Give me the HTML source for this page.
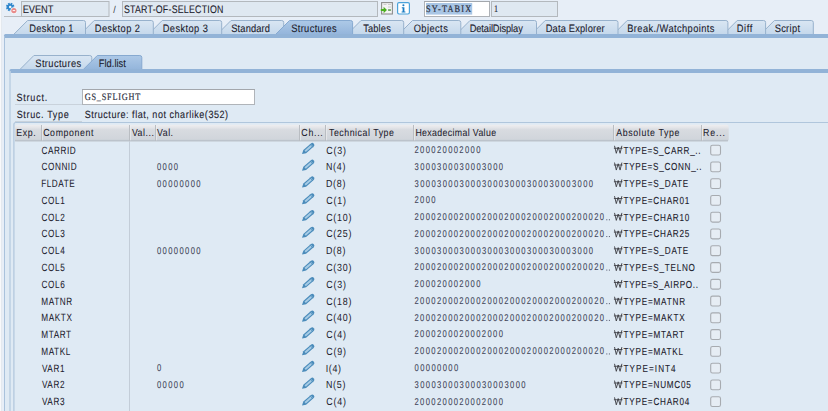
<!DOCTYPE html>
<html><head><meta charset="utf-8"><style>html,body{margin:0;padding:0;width:828px;height:411px;overflow:hidden;background:#e7eef7}svg{display:block}</style></head>
<body><svg width="828" height="411" viewBox="0 0 828 411" text-rendering="geometricPrecision"><defs>
<linearGradient id="gTab" x1="0" y1="0" x2="0" y2="1"><stop offset="0" stop-color="#d9e6f3"/><stop offset="1" stop-color="#c5d8eb"/></linearGradient>
<linearGradient id="gAct" x1="0" y1="0" x2="0" y2="1"><stop offset="0" stop-color="#adc9e7"/><stop offset="1" stop-color="#94b5db"/></linearGradient>
<linearGradient id="gHdr" x1="0" y1="0" x2="0" y2="1"><stop offset="0" stop-color="#eeeef0"/><stop offset="0.14" stop-color="#e6e7ea"/><stop offset="0.3" stop-color="#d8dbe0"/><stop offset="1" stop-color="#cfd4da"/></linearGradient>
</defs>
<rect x="0" y="0" width="828" height="411" fill="#e7eef7"/>
<rect x="0" y="0" width="1" height="411" fill="#f8f9fb"/><rect x="1" y="0" width="1" height="411" fill="#e4e9ef"/>
<rect x="9.25" y="2.80" width="1.9" height="2.3" fill="#2f86cc" transform="rotate(22.5 10.2 7.0)"/>
<rect x="9.25" y="2.80" width="1.9" height="2.3" fill="#2f86cc" transform="rotate(67.5 10.2 7.0)"/>
<rect x="9.25" y="2.80" width="1.9" height="2.3" fill="#2f86cc" transform="rotate(112.5 10.2 7.0)"/>
<rect x="9.25" y="2.80" width="1.9" height="2.3" fill="#2f86cc" transform="rotate(157.5 10.2 7.0)"/>
<rect x="9.25" y="2.80" width="1.9" height="2.3" fill="#2f86cc" transform="rotate(202.5 10.2 7.0)"/>
<rect x="9.25" y="2.80" width="1.9" height="2.3" fill="#2f86cc" transform="rotate(247.5 10.2 7.0)"/>
<rect x="9.25" y="2.80" width="1.9" height="2.3" fill="#2f86cc" transform="rotate(292.5 10.2 7.0)"/>
<rect x="9.25" y="2.80" width="1.9" height="2.3" fill="#2f86cc" transform="rotate(337.5 10.2 7.0)"/>
<circle cx="10.2" cy="7.0" r="2.8" fill="#2f86cc"/><circle cx="10.2" cy="7.0" r="1.25" fill="#f4f7fb"/>
<circle cx="13.9" cy="10.6" r="3.4" fill="#f6f8fb"/><circle cx="13.9" cy="10.6" r="2.65" fill="#e88a8a"/><rect x="12.7" y="10.15" width="2.4" height="0.9" fill="#ffffff"/>
<rect x="4" y="16" width="17.5" height="1" fill="#b9bdc2"/>
<rect x="21.5" y="1.5" width="87.5" height="15" fill="#dfe8f1" stroke="#b3b8bd" stroke-width="1"/>
<rect x="122.5" y="1.5" width="255" height="15" fill="#dfe8f1" stroke="#b3b8bd" stroke-width="1"/>
<rect x="424.5" y="1.5" width="65" height="15" fill="#ffffff" stroke="#aeb2b7" stroke-width="1"/>
<rect x="424" y="1" width="66" height="1" fill="#a3a7ac"/>
<rect x="426" y="3" width="46.2" height="11.6" fill="#a9c6e5"/>
<rect x="491.5" y="1.5" width="66" height="15" fill="#dfe8f1" stroke="#b3b8bd" stroke-width="1"/>
<rect x="381.6" y="2.6" width="10.8" height="11.4" fill="#f4f4f4" stroke="#8d8d8d" stroke-width="1.1"/>
<path d="M383.5,4.5 h3 M388,4.5 h3 M388,7 h3" stroke="#c8c8c8" stroke-width="0.9"/>
<path d="M380.8,8.9 h2.8 v-2.2 l3.4,3.3 l-3.4,3.3 v-2.2 h-2.8 z" fill="#4caf20"/>
<rect x="388.1" y="9.4" width="2.8" height="1.3" fill="#3a8a2a"/>
<rect x="397.6" y="2.6" width="11.8" height="11.4" rx="1.4" fill="#ffffff" stroke="#4aa2da" stroke-width="1.2"/>
<circle cx="403.4" cy="5.2" r="1.05" fill="#1a7cc4"/><path d="M401.8,7.2 h2.6 v4.4 h1 v1 h-3.8 v-1 h1 v-3.4 h-0.8 z" fill="#1a7cc4"/>
<path d="M760.40,34.5 L774.40,20.5 L811.30,20.5 Q813.30,20.5 813.30,22.5 L813.30,34.5 Z" fill="url(#gTab)" stroke="#97b1cc" stroke-width="1"/>
<path d="M723.20,34.5 L737.20,20.5 L763.60,20.5 Q765.60,20.5 765.60,22.5 L765.60,34.5 Z" fill="url(#gTab)" stroke="#97b1cc" stroke-width="1"/>
<path d="M613.20,34.5 L627.20,20.5 L725.90,20.5 Q727.90,20.5 727.90,22.5 L727.90,34.5 Z" fill="url(#gTab)" stroke="#97b1cc" stroke-width="1"/>
<path d="M531.20,34.5 L545.20,20.5 L616.00,20.5 Q618.00,20.5 618.00,22.5 L618.00,34.5 Z" fill="url(#gTab)" stroke="#97b1cc" stroke-width="1"/>
<path d="M456.00,34.5 L470.00,20.5 L534.50,20.5 Q536.50,20.5 536.50,22.5 L536.50,34.5 Z" fill="url(#gTab)" stroke="#97b1cc" stroke-width="1"/>
<path d="M398.50,34.5 L412.50,20.5 L458.80,20.5 Q460.80,20.5 460.80,22.5 L460.80,34.5 Z" fill="url(#gTab)" stroke="#97b1cc" stroke-width="1"/>
<path d="M347.00,34.5 L361.00,20.5 L401.70,20.5 Q403.70,20.5 403.70,22.5 L403.70,34.5 Z" fill="url(#gTab)" stroke="#97b1cc" stroke-width="1"/>
<path d="M217.00,34.5 L231.00,20.5 L281.70,20.5 Q283.70,20.5 283.70,22.5 L283.70,34.5 Z" fill="url(#gTab)" stroke="#97b1cc" stroke-width="1"/>
<path d="M148.20,34.5 L162.20,20.5 L219.70,20.5 Q221.70,20.5 221.70,22.5 L221.70,34.5 Z" fill="url(#gTab)" stroke="#97b1cc" stroke-width="1"/>
<path d="M80.20,34.5 L94.20,20.5 L151.30,20.5 Q153.30,20.5 153.30,22.5 L153.30,34.5 Z" fill="url(#gTab)" stroke="#97b1cc" stroke-width="1"/>
<path d="M13.60,34.5 L27.60,20.5 L83.50,20.5 Q85.50,20.5 85.50,22.5 L85.50,34.5 Z" fill="url(#gTab)" stroke="#97b1cc" stroke-width="1"/>
<path d="M275.50,34.5 L289.50,20.5 L350.60,20.5 Q352.60,20.5 352.60,22.5 L352.60,34.5 Z" fill="url(#gAct)" stroke="#86a9d0" stroke-width="1"/>
<rect x="4" y="34" width="828" height="411" rx="2" fill="#dfeaf4"/>
<rect x="4" y="34" width="828" height="4" rx="1.5" fill="#92b3d7"/>
<rect x="4" y="36" width="1" height="411" fill="#a9c2dc"/>
<path d="M19.90,69.5 L33.90,55.5 L89.80,55.5 Q91.80,55.5 91.80,57.5 L91.80,69.5 Z" fill="url(#gTab)" stroke="#97b1cc" stroke-width="1"/>
<path d="M83.30,69.5 L97.30,55.5 L139.80,55.5 Q141.80,55.5 141.80,57.5 L141.80,69.5 Z" fill="url(#gAct)" stroke="#86a9d0" stroke-width="1"/>
<rect x="9.5" y="69" width="828" height="411" rx="2" fill="#dfeaf4"/>
<rect x="9.5" y="69" width="828" height="3.9" rx="1.5" fill="#92b3d7"/>
<rect x="9.2" y="71" width="1.6" height="411" fill="#bdd1e4"/>
<rect x="15" y="104" width="67" height="1" fill="#c9d2db"/>
<rect x="15" y="121" width="67" height="1" fill="#c9d2db"/>
<rect x="82.5" y="89.5" width="172" height="15" fill="#ffffff" stroke="#b0b4b9" stroke-width="1"/>
<rect x="82" y="89" width="173" height="1" fill="#a3a7ac"/>
<rect x="13.9" y="122.5" width="828" height="411" rx="2" fill="#dfeaf4" stroke="#b0c6dc" stroke-width="1.2"/>
<rect x="15" y="124.8" width="713.7" height="16.4" rx="2" fill="url(#gHdr)"/>
<rect x="15" y="139.9" width="713" height="1.5" fill="#bcc3cb"/>
<rect x="41" y="125" width="1" height="16" fill="#b9bdc2"/><rect x="42" y="125" width="1" height="15.3" fill="#f0f0f2" opacity="0.6"/>
<rect x="129" y="125" width="1" height="16" fill="#b9bdc2"/><rect x="130" y="125" width="1" height="15.3" fill="#f0f0f2" opacity="0.6"/>
<rect x="155" y="125" width="1" height="16" fill="#b9bdc2"/><rect x="156" y="125" width="1" height="15.3" fill="#f0f0f2" opacity="0.6"/>
<rect x="299" y="125" width="1" height="16" fill="#b9bdc2"/><rect x="300" y="125" width="1" height="15.3" fill="#f0f0f2" opacity="0.6"/>
<rect x="325" y="125" width="1" height="16" fill="#b9bdc2"/><rect x="326" y="125" width="1" height="15.3" fill="#f0f0f2" opacity="0.6"/>
<rect x="413" y="125" width="1" height="16" fill="#b9bdc2"/><rect x="414" y="125" width="1" height="15.3" fill="#f0f0f2" opacity="0.6"/>
<rect x="613" y="125" width="1" height="16" fill="#b9bdc2"/><rect x="614" y="125" width="1" height="15.3" fill="#f0f0f2" opacity="0.6"/>
<rect x="701" y="125" width="1" height="16" fill="#b9bdc2"/><rect x="702" y="125" width="1" height="15.3" fill="#f0f0f2" opacity="0.6"/>
<rect x="129" y="141" width="1" height="411" fill="#c3cdd8"/>
<g transform="translate(0 0.00)"><path d="M302.00,154.00 L306.09,153.21 L313.70,146.56 A2.10,2.10 0 0 0 310.94,143.40 L303.33,150.05 Z" fill="#4a8bba"/><path d="M305.82,151.99 L312.68,146.00 L311.36,144.49 L304.50,150.48 Z" fill="#a6cbe5"/><path d="M312.80,147.35 L310.03,144.19" stroke="#4a8bba" stroke-width="0.8"/></g>
<rect x="710.7" y="145.20" width="9.8" height="9.8" rx="1.8" fill="#e6edf4" stroke="#a7abb0" stroke-width="1.1"/>
<path d="M614.5,145.80 L616.3,153.30 L618.2,147.00 L620.1,153.30 L621.9,145.80" fill="none" stroke="#3a3a40" stroke-width="0.9" stroke-linejoin="bevel"/><rect x="613.9" y="147.80" width="8.6" height="0.85" fill="#3a3a40"/>
<g transform="translate(0 16.77)"><path d="M302.00,154.00 L306.09,153.21 L313.70,146.56 A2.10,2.10 0 0 0 310.94,143.40 L303.33,150.05 Z" fill="#4a8bba"/><path d="M305.82,151.99 L312.68,146.00 L311.36,144.49 L304.50,150.48 Z" fill="#a6cbe5"/><path d="M312.80,147.35 L310.03,144.19" stroke="#4a8bba" stroke-width="0.8"/></g>
<rect x="710.7" y="161.97" width="9.8" height="9.8" rx="1.8" fill="#e6edf4" stroke="#a7abb0" stroke-width="1.1"/>
<path d="M614.5,162.57 L616.3,170.07 L618.2,163.77 L620.1,170.07 L621.9,162.57" fill="none" stroke="#3a3a40" stroke-width="0.9" stroke-linejoin="bevel"/><rect x="613.9" y="164.57" width="8.6" height="0.85" fill="#3a3a40"/>
<g transform="translate(0 33.54)"><path d="M302.00,154.00 L306.09,153.21 L313.70,146.56 A2.10,2.10 0 0 0 310.94,143.40 L303.33,150.05 Z" fill="#4a8bba"/><path d="M305.82,151.99 L312.68,146.00 L311.36,144.49 L304.50,150.48 Z" fill="#a6cbe5"/><path d="M312.80,147.35 L310.03,144.19" stroke="#4a8bba" stroke-width="0.8"/></g>
<rect x="710.7" y="178.74" width="9.8" height="9.8" rx="1.8" fill="#e6edf4" stroke="#a7abb0" stroke-width="1.1"/>
<path d="M614.5,179.34 L616.3,186.84 L618.2,180.54 L620.1,186.84 L621.9,179.34" fill="none" stroke="#3a3a40" stroke-width="0.9" stroke-linejoin="bevel"/><rect x="613.9" y="181.34" width="8.6" height="0.85" fill="#3a3a40"/>
<g transform="translate(0 50.31)"><path d="M302.00,154.00 L306.09,153.21 L313.70,146.56 A2.10,2.10 0 0 0 310.94,143.40 L303.33,150.05 Z" fill="#4a8bba"/><path d="M305.82,151.99 L312.68,146.00 L311.36,144.49 L304.50,150.48 Z" fill="#a6cbe5"/><path d="M312.80,147.35 L310.03,144.19" stroke="#4a8bba" stroke-width="0.8"/></g>
<rect x="710.7" y="195.51" width="9.8" height="9.8" rx="1.8" fill="#e6edf4" stroke="#a7abb0" stroke-width="1.1"/>
<path d="M614.5,196.11 L616.3,203.61 L618.2,197.31 L620.1,203.61 L621.9,196.11" fill="none" stroke="#3a3a40" stroke-width="0.9" stroke-linejoin="bevel"/><rect x="613.9" y="198.11" width="8.6" height="0.85" fill="#3a3a40"/>
<g transform="translate(0 67.08)"><path d="M302.00,154.00 L306.09,153.21 L313.70,146.56 A2.10,2.10 0 0 0 310.94,143.40 L303.33,150.05 Z" fill="#4a8bba"/><path d="M305.82,151.99 L312.68,146.00 L311.36,144.49 L304.50,150.48 Z" fill="#a6cbe5"/><path d="M312.80,147.35 L310.03,144.19" stroke="#4a8bba" stroke-width="0.8"/></g>
<rect x="710.7" y="212.28" width="9.8" height="9.8" rx="1.8" fill="#e6edf4" stroke="#a7abb0" stroke-width="1.1"/>
<path d="M614.5,212.88 L616.3,220.38 L618.2,214.08 L620.1,220.38 L621.9,212.88" fill="none" stroke="#3a3a40" stroke-width="0.9" stroke-linejoin="bevel"/><rect x="613.9" y="214.88" width="8.6" height="0.85" fill="#3a3a40"/>
<g transform="translate(0 83.85)"><path d="M302.00,154.00 L306.09,153.21 L313.70,146.56 A2.10,2.10 0 0 0 310.94,143.40 L303.33,150.05 Z" fill="#4a8bba"/><path d="M305.82,151.99 L312.68,146.00 L311.36,144.49 L304.50,150.48 Z" fill="#a6cbe5"/><path d="M312.80,147.35 L310.03,144.19" stroke="#4a8bba" stroke-width="0.8"/></g>
<rect x="710.7" y="229.05" width="9.8" height="9.8" rx="1.8" fill="#e6edf4" stroke="#a7abb0" stroke-width="1.1"/>
<path d="M614.5,229.65 L616.3,237.15 L618.2,230.85 L620.1,237.15 L621.9,229.65" fill="none" stroke="#3a3a40" stroke-width="0.9" stroke-linejoin="bevel"/><rect x="613.9" y="231.65" width="8.6" height="0.85" fill="#3a3a40"/>
<g transform="translate(0 100.62)"><path d="M302.00,154.00 L306.09,153.21 L313.70,146.56 A2.10,2.10 0 0 0 310.94,143.40 L303.33,150.05 Z" fill="#4a8bba"/><path d="M305.82,151.99 L312.68,146.00 L311.36,144.49 L304.50,150.48 Z" fill="#a6cbe5"/><path d="M312.80,147.35 L310.03,144.19" stroke="#4a8bba" stroke-width="0.8"/></g>
<rect x="710.7" y="245.82" width="9.8" height="9.8" rx="1.8" fill="#e6edf4" stroke="#a7abb0" stroke-width="1.1"/>
<path d="M614.5,246.42 L616.3,253.92 L618.2,247.62 L620.1,253.92 L621.9,246.42" fill="none" stroke="#3a3a40" stroke-width="0.9" stroke-linejoin="bevel"/><rect x="613.9" y="248.42" width="8.6" height="0.85" fill="#3a3a40"/>
<g transform="translate(0 117.39)"><path d="M302.00,154.00 L306.09,153.21 L313.70,146.56 A2.10,2.10 0 0 0 310.94,143.40 L303.33,150.05 Z" fill="#4a8bba"/><path d="M305.82,151.99 L312.68,146.00 L311.36,144.49 L304.50,150.48 Z" fill="#a6cbe5"/><path d="M312.80,147.35 L310.03,144.19" stroke="#4a8bba" stroke-width="0.8"/></g>
<rect x="710.7" y="262.59" width="9.8" height="9.8" rx="1.8" fill="#e6edf4" stroke="#a7abb0" stroke-width="1.1"/>
<path d="M614.5,263.19 L616.3,270.69 L618.2,264.39 L620.1,270.69 L621.9,263.19" fill="none" stroke="#3a3a40" stroke-width="0.9" stroke-linejoin="bevel"/><rect x="613.9" y="265.19" width="8.6" height="0.85" fill="#3a3a40"/>
<g transform="translate(0 134.16)"><path d="M302.00,154.00 L306.09,153.21 L313.70,146.56 A2.10,2.10 0 0 0 310.94,143.40 L303.33,150.05 Z" fill="#4a8bba"/><path d="M305.82,151.99 L312.68,146.00 L311.36,144.49 L304.50,150.48 Z" fill="#a6cbe5"/><path d="M312.80,147.35 L310.03,144.19" stroke="#4a8bba" stroke-width="0.8"/></g>
<rect x="710.7" y="279.36" width="9.8" height="9.8" rx="1.8" fill="#e6edf4" stroke="#a7abb0" stroke-width="1.1"/>
<path d="M614.5,279.96 L616.3,287.46 L618.2,281.16 L620.1,287.46 L621.9,279.96" fill="none" stroke="#3a3a40" stroke-width="0.9" stroke-linejoin="bevel"/><rect x="613.9" y="281.96" width="8.6" height="0.85" fill="#3a3a40"/>
<g transform="translate(0 150.93)"><path d="M302.00,154.00 L306.09,153.21 L313.70,146.56 A2.10,2.10 0 0 0 310.94,143.40 L303.33,150.05 Z" fill="#4a8bba"/><path d="M305.82,151.99 L312.68,146.00 L311.36,144.49 L304.50,150.48 Z" fill="#a6cbe5"/><path d="M312.80,147.35 L310.03,144.19" stroke="#4a8bba" stroke-width="0.8"/></g>
<rect x="710.7" y="296.13" width="9.8" height="9.8" rx="1.8" fill="#e6edf4" stroke="#a7abb0" stroke-width="1.1"/>
<path d="M614.5,296.73 L616.3,304.23 L618.2,297.93 L620.1,304.23 L621.9,296.73" fill="none" stroke="#3a3a40" stroke-width="0.9" stroke-linejoin="bevel"/><rect x="613.9" y="298.73" width="8.6" height="0.85" fill="#3a3a40"/>
<g transform="translate(0 167.70)"><path d="M302.00,154.00 L306.09,153.21 L313.70,146.56 A2.10,2.10 0 0 0 310.94,143.40 L303.33,150.05 Z" fill="#4a8bba"/><path d="M305.82,151.99 L312.68,146.00 L311.36,144.49 L304.50,150.48 Z" fill="#a6cbe5"/><path d="M312.80,147.35 L310.03,144.19" stroke="#4a8bba" stroke-width="0.8"/></g>
<rect x="710.7" y="312.90" width="9.8" height="9.8" rx="1.8" fill="#e6edf4" stroke="#a7abb0" stroke-width="1.1"/>
<path d="M614.5,313.50 L616.3,321.00 L618.2,314.70 L620.1,321.00 L621.9,313.50" fill="none" stroke="#3a3a40" stroke-width="0.9" stroke-linejoin="bevel"/><rect x="613.9" y="315.50" width="8.6" height="0.85" fill="#3a3a40"/>
<g transform="translate(0 184.47)"><path d="M302.00,154.00 L306.09,153.21 L313.70,146.56 A2.10,2.10 0 0 0 310.94,143.40 L303.33,150.05 Z" fill="#4a8bba"/><path d="M305.82,151.99 L312.68,146.00 L311.36,144.49 L304.50,150.48 Z" fill="#a6cbe5"/><path d="M312.80,147.35 L310.03,144.19" stroke="#4a8bba" stroke-width="0.8"/></g>
<rect x="710.7" y="329.67" width="9.8" height="9.8" rx="1.8" fill="#e6edf4" stroke="#a7abb0" stroke-width="1.1"/>
<path d="M614.5,330.27 L616.3,337.77 L618.2,331.47 L620.1,337.77 L621.9,330.27" fill="none" stroke="#3a3a40" stroke-width="0.9" stroke-linejoin="bevel"/><rect x="613.9" y="332.27" width="8.6" height="0.85" fill="#3a3a40"/>
<g transform="translate(0 201.24)"><path d="M302.00,154.00 L306.09,153.21 L313.70,146.56 A2.10,2.10 0 0 0 310.94,143.40 L303.33,150.05 Z" fill="#4a8bba"/><path d="M305.82,151.99 L312.68,146.00 L311.36,144.49 L304.50,150.48 Z" fill="#a6cbe5"/><path d="M312.80,147.35 L310.03,144.19" stroke="#4a8bba" stroke-width="0.8"/></g>
<rect x="710.7" y="346.44" width="9.8" height="9.8" rx="1.8" fill="#e6edf4" stroke="#a7abb0" stroke-width="1.1"/>
<path d="M614.5,347.04 L616.3,354.54 L618.2,348.24 L620.1,354.54 L621.9,347.04" fill="none" stroke="#3a3a40" stroke-width="0.9" stroke-linejoin="bevel"/><rect x="613.9" y="349.04" width="8.6" height="0.85" fill="#3a3a40"/>
<g transform="translate(0 218.01)"><path d="M302.00,154.00 L306.09,153.21 L313.70,146.56 A2.10,2.10 0 0 0 310.94,143.40 L303.33,150.05 Z" fill="#4a8bba"/><path d="M305.82,151.99 L312.68,146.00 L311.36,144.49 L304.50,150.48 Z" fill="#a6cbe5"/><path d="M312.80,147.35 L310.03,144.19" stroke="#4a8bba" stroke-width="0.8"/></g>
<rect x="710.7" y="363.21" width="9.8" height="9.8" rx="1.8" fill="#e6edf4" stroke="#a7abb0" stroke-width="1.1"/>
<path d="M614.5,363.81 L616.3,371.31 L618.2,365.01 L620.1,371.31 L621.9,363.81" fill="none" stroke="#3a3a40" stroke-width="0.9" stroke-linejoin="bevel"/><rect x="613.9" y="365.81" width="8.6" height="0.85" fill="#3a3a40"/>
<g transform="translate(0 234.78)"><path d="M302.00,154.00 L306.09,153.21 L313.70,146.56 A2.10,2.10 0 0 0 310.94,143.40 L303.33,150.05 Z" fill="#4a8bba"/><path d="M305.82,151.99 L312.68,146.00 L311.36,144.49 L304.50,150.48 Z" fill="#a6cbe5"/><path d="M312.80,147.35 L310.03,144.19" stroke="#4a8bba" stroke-width="0.8"/></g>
<rect x="710.7" y="379.98" width="9.8" height="9.8" rx="1.8" fill="#e6edf4" stroke="#a7abb0" stroke-width="1.1"/>
<path d="M614.5,380.58 L616.3,388.08 L618.2,381.78 L620.1,388.08 L621.9,380.58" fill="none" stroke="#3a3a40" stroke-width="0.9" stroke-linejoin="bevel"/><rect x="613.9" y="382.58" width="8.6" height="0.85" fill="#3a3a40"/>
<g transform="translate(0 251.55)"><path d="M302.00,154.00 L306.09,153.21 L313.70,146.56 A2.10,2.10 0 0 0 310.94,143.40 L303.33,150.05 Z" fill="#4a8bba"/><path d="M305.82,151.99 L312.68,146.00 L311.36,144.49 L304.50,150.48 Z" fill="#a6cbe5"/><path d="M312.80,147.35 L310.03,144.19" stroke="#4a8bba" stroke-width="0.8"/></g>
<rect x="710.7" y="396.75" width="9.8" height="9.8" rx="1.8" fill="#e6edf4" stroke="#a7abb0" stroke-width="1.1"/>
<path d="M614.5,397.35 L616.3,404.85 L618.2,398.55 L620.1,404.85 L621.9,397.35" fill="none" stroke="#3a3a40" stroke-width="0.9" stroke-linejoin="bevel"/><rect x="613.9" y="399.35" width="8.6" height="0.85" fill="#3a3a40"/>
<rect x="606.3" y="219.28" width="1" height="1" fill="#50546a"/><rect x="608.9" y="219.28" width="1" height="1" fill="#50546a"/>
<rect x="606.3" y="236.05" width="1" height="1" fill="#50546a"/><rect x="608.9" y="236.05" width="1" height="1" fill="#50546a"/>
<rect x="606.3" y="269.59" width="1" height="1" fill="#50546a"/><rect x="608.9" y="269.59" width="1" height="1" fill="#50546a"/>
<rect x="606.3" y="303.13" width="1" height="1" fill="#50546a"/><rect x="608.9" y="303.13" width="1" height="1" fill="#50546a"/>
<rect x="606.3" y="319.90" width="1" height="1" fill="#50546a"/><rect x="608.9" y="319.90" width="1" height="1" fill="#50546a"/>
<rect x="606.3" y="353.44" width="1" height="1" fill="#50546a"/><rect x="608.9" y="353.44" width="1" height="1" fill="#50546a"/>
<text transform="translate(22.65 13.10) scale(0.8500 1)" font-family="Liberation Sans" font-size="11" fill="#1c202c" letter-spacing="-0.097" stroke="#1c202c" stroke-width="0.1">EVENT</text>
<text transform="translate(113.20 12.90) scale(0.9000 1)" font-family="Liberation Sans" font-size="10" fill="#3a3d4a">/</text>
<text transform="translate(123.95 13.10) scale(0.8000 1)" font-family="Liberation Sans" font-size="11" fill="#1c202c" letter-spacing="0.285" stroke="#1c202c" stroke-width="0.1">START-OF-SELECTION</text>
<text transform="translate(493.78 12.30) scale(0.9000 1)" font-family="Liberation Serif" font-size="10" fill="#2c3040" stroke="#2c3040" stroke-width="0.05">1</text>
<text transform="translate(426.01 12.20) scale(0.8400 1)" font-family="Liberation Serif" font-size="9.8" fill="#2c3040" letter-spacing="1.403" stroke="#2c3040" stroke-width="0.22">SY-TABIX</text>
<text transform="translate(29.26 31.90) scale(0.8600 1)" font-family="Liberation Sans" font-size="10.8" fill="#1c202c" letter-spacing="0.342" stroke="#1c202c" stroke-width="0.1">Desktop 1</text>
<text transform="translate(94.76 31.90) scale(0.8600 1)" font-family="Liberation Sans" font-size="10.8" fill="#1c202c" letter-spacing="0.487" stroke="#1c202c" stroke-width="0.1">Desktop 2</text>
<text transform="translate(162.76 31.90) scale(0.8600 1)" font-family="Liberation Sans" font-size="10.8" fill="#1c202c" letter-spacing="0.474" stroke="#1c202c" stroke-width="0.1">Desktop 3</text>
<text transform="translate(231.23 31.90) scale(0.8600 1)" font-family="Liberation Sans" font-size="10.8" fill="#1c202c" letter-spacing="0.182" stroke="#1c202c" stroke-width="0.1">Standard</text>
<text transform="translate(291.13 31.90) scale(0.8600 1)" font-family="Liberation Sans" font-size="10.8" fill="#1c202c" letter-spacing="0.429" stroke="#1c202c" stroke-width="0.1">Structures</text>
<text transform="translate(363.21 31.90) scale(0.8600 1)" font-family="Liberation Sans" font-size="10.8" fill="#1c202c" letter-spacing="0.167" stroke="#1c202c" stroke-width="0.1">Tables</text>
<text transform="translate(413.63 31.90) scale(0.8600 1)" font-family="Liberation Sans" font-size="10.8" fill="#1c202c" letter-spacing="0.516" stroke="#1c202c" stroke-width="0.1">Objects</text>
<text transform="translate(469.66 31.90) scale(0.8600 1)" font-family="Liberation Sans" font-size="10.8" fill="#1c202c" letter-spacing="-0.102" stroke="#1c202c" stroke-width="0.1">DetailDisplay</text>
<text transform="translate(545.66 31.90) scale(0.8600 1)" font-family="Liberation Sans" font-size="10.8" fill="#1c202c" letter-spacing="0.221" stroke="#1c202c" stroke-width="0.1">Data Explorer</text>
<text transform="translate(627.26 31.90) scale(0.8600 1)" font-family="Liberation Sans" font-size="10.8" fill="#1c202c" letter-spacing="0.481" stroke="#1c202c" stroke-width="0.1">Break./Watchpoints</text>
<text transform="translate(736.66 31.90) scale(0.8600 1)" font-family="Liberation Sans" font-size="10.8" fill="#1c202c" letter-spacing="0.720" stroke="#1c202c" stroke-width="0.1">Diff</text>
<text transform="translate(774.63 31.90) scale(0.8600 1)" font-family="Liberation Sans" font-size="10.8" fill="#1c202c" letter-spacing="0.374" stroke="#1c202c" stroke-width="0.1">Script</text>
<text transform="translate(35.33 66.60) scale(0.8600 1)" font-family="Liberation Sans" font-size="10.8" fill="#1c202c" letter-spacing="0.442" stroke="#1c202c" stroke-width="0.1">Structures</text>
<text transform="translate(98.86 66.60) scale(0.8600 1)" font-family="Liberation Sans" font-size="10.8" fill="#1c202c" letter-spacing="0.015" stroke="#1c202c" stroke-width="0.1">Fld.list</text>
<text transform="translate(16.44 100.60) scale(0.8600 1)" font-family="Liberation Sans" font-size="10.5" fill="#1c202c" letter-spacing="0.923" stroke="#1c202c" stroke-width="0.1">Struct.</text>
<text transform="translate(16.64 118.10) scale(0.8600 1)" font-family="Liberation Sans" font-size="10.5" fill="#1c202c" letter-spacing="0.758" stroke="#1c202c" stroke-width="0.1">Struc. Type</text>
<text transform="translate(84.67 99.70) scale(0.8400 1)" font-family="Liberation Serif" font-size="9.8" fill="#2c3040" letter-spacing="0.944" stroke="#2c3040" stroke-width="0.2">GS_SFLIGHT</text>
<text transform="translate(84.64 117.90) scale(0.8600 1)" font-family="Liberation Sans" font-size="10.5" fill="#1c202c" letter-spacing="0.615" stroke="#1c202c" stroke-width="0.1">Structure: flat, not charlike(352)</text>
<text transform="translate(16.20 136.30) scale(0.8600 1)" font-family="Liberation Sans" font-size="10.2" fill="#1c202c" letter-spacing="0.744" stroke="#1c202c" stroke-width="0.06">Exp.</text>
<text transform="translate(43.16 136.30) scale(0.8600 1)" font-family="Liberation Sans" font-size="10.2" fill="#1c202c" letter-spacing="0.737" stroke="#1c202c" stroke-width="0.06">Component</text>
<text transform="translate(131.90 136.30) scale(0.8600 1)" font-family="Liberation Sans" font-size="10.2" fill="#1c202c" letter-spacing="0.612" stroke="#1c202c" stroke-width="0.06">Val...</text>
<text transform="translate(157.00 136.30) scale(0.8600 1)" font-family="Liberation Sans" font-size="10.2" fill="#1c202c" letter-spacing="0.623" stroke="#1c202c" stroke-width="0.06">Val.</text>
<text transform="translate(301.36 136.30) scale(0.8600 1)" font-family="Liberation Sans" font-size="10.2" fill="#1c202c" letter-spacing="0.838" stroke="#1c202c" stroke-width="0.06">Ch...</text>
<text transform="translate(329.02 136.30) scale(0.8600 1)" font-family="Liberation Sans" font-size="10.2" fill="#1c202c" letter-spacing="0.632" stroke="#1c202c" stroke-width="0.06">Technical Type</text>
<text transform="translate(415.40 136.30) scale(0.8600 1)" font-family="Liberation Sans" font-size="10.2" fill="#1c202c" letter-spacing="0.421" stroke="#1c202c" stroke-width="0.06">Hexadecimal Value</text>
<text transform="translate(616.20 136.30) scale(0.8600 1)" font-family="Liberation Sans" font-size="10.2" fill="#1c202c" letter-spacing="0.768" stroke="#1c202c" stroke-width="0.06">Absolute Type</text>
<text transform="translate(703.10 136.30) scale(0.8600 1)" font-family="Liberation Sans" font-size="10.2" fill="#1c202c" letter-spacing="0.973" stroke="#1c202c" stroke-width="0.06">Re...</text>
<text transform="translate(41.49 153.60) scale(0.7800 1)" font-family="Liberation Sans" font-size="10.5" fill="#1c202c" letter-spacing="0.705" stroke="#1c202c" stroke-width="0.05">CARRID</text>
<text transform="translate(326.16 153.60) scale(0.8600 1)" font-family="Liberation Sans" font-size="10.3" fill="#1c202c" letter-spacing="0.956" stroke="#1c202c" stroke-width="0.03">C(3)</text>
<text transform="translate(414.42 153.00) scale(0.7800 1)" font-family="Liberation Sans" font-size="9.8" fill="#3e4256" letter-spacing="1.755" stroke="#3e4256" stroke-width="0.08">200020002000</text>
<text transform="translate(623.54 153.60) scale(0.8000 1)" font-family="Liberation Sans" font-size="10.2" fill="#1c202c" letter-spacing="0.850" stroke="#1c202c" stroke-width="0.1">TYPE=S_CARR_..</text>
<text transform="translate(41.49 170.37) scale(0.7800 1)" font-family="Liberation Sans" font-size="10.5" fill="#1c202c" letter-spacing="0.726" stroke="#1c202c" stroke-width="0.05">CONNID</text>
<text transform="translate(156.97 169.77) scale(0.7800 1)" font-family="Liberation Sans" font-size="9.8" fill="#3e4256" letter-spacing="1.755" stroke="#3e4256" stroke-width="0.08">0000</text>
<text transform="translate(325.89 170.37) scale(0.8600 1)" font-family="Liberation Sans" font-size="10.3" fill="#1c202c" letter-spacing="0.940" stroke="#1c202c" stroke-width="0.03">N(4)</text>
<text transform="translate(414.57 169.77) scale(0.7800 1)" font-family="Liberation Sans" font-size="9.8" fill="#3e4256" letter-spacing="1.755" stroke="#3e4256" stroke-width="0.08">3000300030003000</text>
<text transform="translate(623.54 170.37) scale(0.8000 1)" font-family="Liberation Sans" font-size="10.2" fill="#1c202c" letter-spacing="0.862" stroke="#1c202c" stroke-width="0.1">TYPE=S_CONN_..</text>
<text transform="translate(41.24 187.14) scale(0.7800 1)" font-family="Liberation Sans" font-size="10.5" fill="#1c202c" letter-spacing="0.687" stroke="#1c202c" stroke-width="0.05">FLDATE</text>
<text transform="translate(156.97 186.54) scale(0.7800 1)" font-family="Liberation Sans" font-size="9.8" fill="#3e4256" letter-spacing="1.755" stroke="#3e4256" stroke-width="0.08">00000000</text>
<text transform="translate(325.89 187.14) scale(0.8600 1)" font-family="Liberation Sans" font-size="10.3" fill="#1c202c" letter-spacing="0.940" stroke="#1c202c" stroke-width="0.03">D(8)</text>
<text transform="translate(414.57 186.54) scale(0.7800 1)" font-family="Liberation Sans" font-size="9.8" fill="#3e4256" letter-spacing="1.755" stroke="#3e4256" stroke-width="0.08">30003000300030003000300030003000</text>
<text transform="translate(623.54 187.14) scale(0.8000 1)" font-family="Liberation Sans" font-size="10.2" fill="#1c202c" letter-spacing="0.931" stroke="#1c202c" stroke-width="0.1">TYPE=S_DATE</text>
<text transform="translate(41.49 203.91) scale(0.7800 1)" font-family="Liberation Sans" font-size="10.5" fill="#1c202c" letter-spacing="0.790" stroke="#1c202c" stroke-width="0.05">COL1</text>
<text transform="translate(326.16 203.91) scale(0.8600 1)" font-family="Liberation Sans" font-size="10.3" fill="#1c202c" letter-spacing="0.956" stroke="#1c202c" stroke-width="0.03">C(1)</text>
<text transform="translate(414.42 203.31) scale(0.7800 1)" font-family="Liberation Sans" font-size="9.8" fill="#3e4256" letter-spacing="1.755" stroke="#3e4256" stroke-width="0.08">2000</text>
<text transform="translate(623.54 203.91) scale(0.8000 1)" font-family="Liberation Sans" font-size="10.2" fill="#1c202c" letter-spacing="0.947" stroke="#1c202c" stroke-width="0.1">TYPE=CHAR01</text>
<text transform="translate(41.49 220.68) scale(0.7800 1)" font-family="Liberation Sans" font-size="10.5" fill="#1c202c" letter-spacing="0.790" stroke="#1c202c" stroke-width="0.05">COL2</text>
<text transform="translate(326.16 220.68) scale(0.8600 1)" font-family="Liberation Sans" font-size="10.3" fill="#1c202c" letter-spacing="0.933" stroke="#1c202c" stroke-width="0.03">C(10)</text>
<text transform="translate(414.42 220.08) scale(0.7800 1)" font-family="Liberation Sans" font-size="9.8" fill="#3e4256" letter-spacing="1.755" stroke="#3e4256" stroke-width="0.08">2000200020002000200020002000200020</text>
<text transform="translate(623.54 220.68) scale(0.8000 1)" font-family="Liberation Sans" font-size="10.2" fill="#1c202c" letter-spacing="0.949" stroke="#1c202c" stroke-width="0.1">TYPE=CHAR10</text>
<text transform="translate(41.49 237.45) scale(0.7800 1)" font-family="Liberation Sans" font-size="10.5" fill="#1c202c" letter-spacing="0.793" stroke="#1c202c" stroke-width="0.05">COL3</text>
<text transform="translate(326.16 237.45) scale(0.8600 1)" font-family="Liberation Sans" font-size="10.3" fill="#1c202c" letter-spacing="0.933" stroke="#1c202c" stroke-width="0.03">C(25)</text>
<text transform="translate(414.42 236.85) scale(0.7800 1)" font-family="Liberation Sans" font-size="9.8" fill="#3e4256" letter-spacing="1.755" stroke="#3e4256" stroke-width="0.08">2000200020002000200020002000200020</text>
<text transform="translate(623.54 237.45) scale(0.8000 1)" font-family="Liberation Sans" font-size="10.2" fill="#1c202c" letter-spacing="0.949" stroke="#1c202c" stroke-width="0.1">TYPE=CHAR25</text>
<text transform="translate(41.49 254.22) scale(0.7800 1)" font-family="Liberation Sans" font-size="10.5" fill="#1c202c" letter-spacing="0.797" stroke="#1c202c" stroke-width="0.05">COL4</text>
<text transform="translate(156.97 253.62) scale(0.7800 1)" font-family="Liberation Sans" font-size="9.8" fill="#3e4256" letter-spacing="1.755" stroke="#3e4256" stroke-width="0.08">00000000</text>
<text transform="translate(325.89 254.22) scale(0.8600 1)" font-family="Liberation Sans" font-size="10.3" fill="#1c202c" letter-spacing="0.940" stroke="#1c202c" stroke-width="0.03">D(8)</text>
<text transform="translate(414.57 253.62) scale(0.7800 1)" font-family="Liberation Sans" font-size="9.8" fill="#3e4256" letter-spacing="1.755" stroke="#3e4256" stroke-width="0.08">30003000300030003000300030003000</text>
<text transform="translate(623.54 254.22) scale(0.8000 1)" font-family="Liberation Sans" font-size="10.2" fill="#1c202c" letter-spacing="0.931" stroke="#1c202c" stroke-width="0.1">TYPE=S_DATE</text>
<text transform="translate(41.49 270.99) scale(0.7800 1)" font-family="Liberation Sans" font-size="10.5" fill="#1c202c" letter-spacing="0.793" stroke="#1c202c" stroke-width="0.05">COL5</text>
<text transform="translate(326.16 270.99) scale(0.8600 1)" font-family="Liberation Sans" font-size="10.3" fill="#1c202c" letter-spacing="0.933" stroke="#1c202c" stroke-width="0.03">C(30)</text>
<text transform="translate(414.42 270.39) scale(0.7800 1)" font-family="Liberation Sans" font-size="9.8" fill="#3e4256" letter-spacing="1.755" stroke="#3e4256" stroke-width="0.08">2000200020002000200020002000200020</text>
<text transform="translate(623.54 270.99) scale(0.8000 1)" font-family="Liberation Sans" font-size="10.2" fill="#1c202c" letter-spacing="0.935" stroke="#1c202c" stroke-width="0.1">TYPE=S_TELNO</text>
<text transform="translate(41.49 287.76) scale(0.7800 1)" font-family="Liberation Sans" font-size="10.5" fill="#1c202c" letter-spacing="0.793" stroke="#1c202c" stroke-width="0.05">COL6</text>
<text transform="translate(326.16 287.76) scale(0.8600 1)" font-family="Liberation Sans" font-size="10.3" fill="#1c202c" letter-spacing="0.956" stroke="#1c202c" stroke-width="0.03">C(3)</text>
<text transform="translate(414.42 287.16) scale(0.7800 1)" font-family="Liberation Sans" font-size="9.8" fill="#3e4256" letter-spacing="1.755" stroke="#3e4256" stroke-width="0.08">200020002000</text>
<text transform="translate(623.54 287.76) scale(0.8000 1)" font-family="Liberation Sans" font-size="10.2" fill="#1c202c" letter-spacing="0.822" stroke="#1c202c" stroke-width="0.1">TYPE=S_AIRPO..</text>
<text transform="translate(41.24 304.53) scale(0.7800 1)" font-family="Liberation Sans" font-size="10.5" fill="#1c202c" letter-spacing="0.791" stroke="#1c202c" stroke-width="0.05">MATNR</text>
<text transform="translate(326.16 304.53) scale(0.8600 1)" font-family="Liberation Sans" font-size="10.3" fill="#1c202c" letter-spacing="0.933" stroke="#1c202c" stroke-width="0.03">C(18)</text>
<text transform="translate(414.42 303.93) scale(0.7800 1)" font-family="Liberation Sans" font-size="9.8" fill="#3e4256" letter-spacing="1.755" stroke="#3e4256" stroke-width="0.08">2000200020002000200020002000200020</text>
<text transform="translate(623.54 304.53) scale(0.8000 1)" font-family="Liberation Sans" font-size="10.2" fill="#1c202c" letter-spacing="0.984" stroke="#1c202c" stroke-width="0.1">TYPE=MATNR</text>
<text transform="translate(41.24 321.30) scale(0.7800 1)" font-family="Liberation Sans" font-size="10.5" fill="#1c202c" letter-spacing="0.789" stroke="#1c202c" stroke-width="0.05">MAKTX</text>
<text transform="translate(326.16 321.30) scale(0.8600 1)" font-family="Liberation Sans" font-size="10.3" fill="#1c202c" letter-spacing="0.933" stroke="#1c202c" stroke-width="0.03">C(40)</text>
<text transform="translate(414.42 320.70) scale(0.7800 1)" font-family="Liberation Sans" font-size="9.8" fill="#3e4256" letter-spacing="1.755" stroke="#3e4256" stroke-width="0.08">2000200020002000200020002000200020</text>
<text transform="translate(623.54 321.30) scale(0.8000 1)" font-family="Liberation Sans" font-size="10.2" fill="#1c202c" letter-spacing="0.982" stroke="#1c202c" stroke-width="0.1">TYPE=MAKTX</text>
<text transform="translate(41.24 338.07) scale(0.7800 1)" font-family="Liberation Sans" font-size="10.5" fill="#1c202c" letter-spacing="0.766" stroke="#1c202c" stroke-width="0.05">MTART</text>
<text transform="translate(326.16 338.07) scale(0.8600 1)" font-family="Liberation Sans" font-size="10.3" fill="#1c202c" letter-spacing="0.956" stroke="#1c202c" stroke-width="0.03">C(4)</text>
<text transform="translate(414.42 337.47) scale(0.7800 1)" font-family="Liberation Sans" font-size="9.8" fill="#3e4256" letter-spacing="1.755" stroke="#3e4256" stroke-width="0.08">2000200020002000</text>
<text transform="translate(623.54 338.07) scale(0.8000 1)" font-family="Liberation Sans" font-size="10.2" fill="#1c202c" letter-spacing="0.968" stroke="#1c202c" stroke-width="0.1">TYPE=MTART</text>
<text transform="translate(41.24 354.84) scale(0.7800 1)" font-family="Liberation Sans" font-size="10.5" fill="#1c202c" letter-spacing="0.743" stroke="#1c202c" stroke-width="0.05">MATKL</text>
<text transform="translate(326.16 354.84) scale(0.8600 1)" font-family="Liberation Sans" font-size="10.3" fill="#1c202c" letter-spacing="0.956" stroke="#1c202c" stroke-width="0.03">C(9)</text>
<text transform="translate(414.42 354.24) scale(0.7800 1)" font-family="Liberation Sans" font-size="9.8" fill="#3e4256" letter-spacing="1.755" stroke="#3e4256" stroke-width="0.08">2000200020002000200020002000200020</text>
<text transform="translate(623.54 354.84) scale(0.8000 1)" font-family="Liberation Sans" font-size="10.2" fill="#1c202c" letter-spacing="0.953" stroke="#1c202c" stroke-width="0.1">TYPE=MATKL</text>
<text transform="translate(41.90 371.61) scale(0.7800 1)" font-family="Liberation Sans" font-size="10.5" fill="#1c202c" letter-spacing="0.783" stroke="#1c202c" stroke-width="0.05">VAR1</text>
<text transform="translate(156.97 371.01) scale(0.7800 1)" font-family="Liberation Sans" font-size="9.8" fill="#3e4256" letter-spacing="1.755" stroke="#3e4256" stroke-width="0.08">0</text>
<text transform="translate(325.80 371.61) scale(0.8600 1)" font-family="Liberation Sans" font-size="10.3" fill="#1c202c" letter-spacing="0.704" stroke="#1c202c" stroke-width="0.03">I(4)</text>
<text transform="translate(414.57 371.01) scale(0.7800 1)" font-family="Liberation Sans" font-size="9.8" fill="#3e4256" letter-spacing="1.755" stroke="#3e4256" stroke-width="0.08">00000000</text>
<text transform="translate(623.54 371.61) scale(0.8000 1)" font-family="Liberation Sans" font-size="10.2" fill="#1c202c" letter-spacing="1.313" stroke="#1c202c" stroke-width="0.1">TYPE=INT4</text>
<text transform="translate(41.90 388.38) scale(0.7800 1)" font-family="Liberation Sans" font-size="10.5" fill="#1c202c" letter-spacing="0.783" stroke="#1c202c" stroke-width="0.05">VAR2</text>
<text transform="translate(156.97 387.78) scale(0.7800 1)" font-family="Liberation Sans" font-size="9.8" fill="#3e4256" letter-spacing="1.755" stroke="#3e4256" stroke-width="0.08">00000</text>
<text transform="translate(325.89 388.38) scale(0.8600 1)" font-family="Liberation Sans" font-size="10.3" fill="#1c202c" letter-spacing="0.940" stroke="#1c202c" stroke-width="0.03">N(5)</text>
<text transform="translate(414.57 387.78) scale(0.7800 1)" font-family="Liberation Sans" font-size="9.8" fill="#3e4256" letter-spacing="1.755" stroke="#3e4256" stroke-width="0.08">30003000300030003000</text>
<text transform="translate(623.54 388.38) scale(0.8000 1)" font-family="Liberation Sans" font-size="10.2" fill="#1c202c" letter-spacing="0.971" stroke="#1c202c" stroke-width="0.1">TYPE=NUMC05</text>
<text transform="translate(41.90 405.15) scale(0.7800 1)" font-family="Liberation Sans" font-size="10.5" fill="#1c202c" letter-spacing="0.786" stroke="#1c202c" stroke-width="0.05">VAR3</text>
<text transform="translate(326.16 405.15) scale(0.8600 1)" font-family="Liberation Sans" font-size="10.3" fill="#1c202c" letter-spacing="0.956" stroke="#1c202c" stroke-width="0.03">C(4)</text>
<text transform="translate(414.42 404.55) scale(0.7800 1)" font-family="Liberation Sans" font-size="9.8" fill="#3e4256" letter-spacing="1.755" stroke="#3e4256" stroke-width="0.08">2000200020002000</text>
<text transform="translate(623.54 405.15) scale(0.8000 1)" font-family="Liberation Sans" font-size="10.2" fill="#1c202c" letter-spacing="0.950" stroke="#1c202c" stroke-width="0.1">TYPE=CHAR04</text>
</svg></body></html>
